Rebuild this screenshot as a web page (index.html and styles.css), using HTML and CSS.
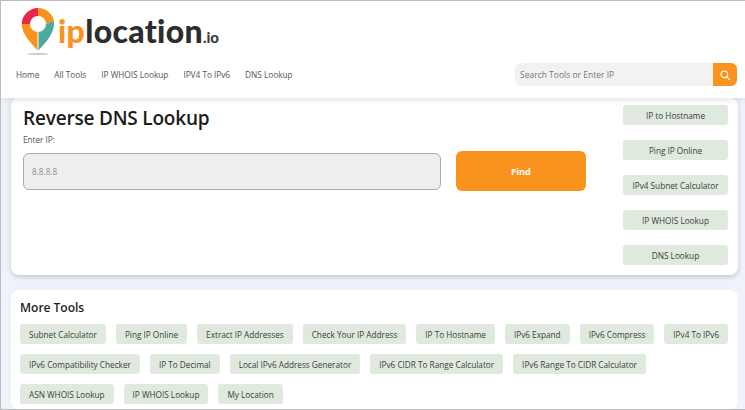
FILE: index.html
```html
<!DOCTYPE html>
<html lang="en">
<head>
<meta charset="utf-8">
<title>Reverse DNS Lookup</title>
<link rel="stylesheet" href="styles.css">
</head>
<body>
<div class="frame">
  <header class="header">
    <a class="logo" href="#">
      <svg class="pin" width="36" height="48" viewBox="20 6 36 48">
        <ellipse cx="38" cy="53" rx="11" ry="1" fill="#ccc"/>
        <path d="M38 7A16.3 16.3 0 0 0 21.700 23H30A8 8 0 0 1 38 15Z" fill="#e8264e"/>
        <path d="M21.700 23C21.700 33 31 42 37.500 49.500V31A8 8 0 0 1 30 23Z" fill="#f9931d"/>
        <path d="M38 7A16.300 16.300 0 0 1 54 20L46 23A8 8 0 0 0 38 15Z" fill="#f9931d"/>
        <path d="M54 20C55 33 45 42 38.500 49.500V31A8 8 0 0 0 46 23Z" fill="#4da8a0"/>
      </svg>
      <span class="logo-text"><span class="logo-ip">ip</span>location<span class="logo-io">.io</span></span>
    </a>
    <div class="header-row">
      <nav class="nav">
        <a href="#">Home</a>
        <a href="#">All Tools</a>
        <a href="#">IP WHOIS Lookup</a>
        <a href="#">IPV4 To IPv6</a>
        <a href="#">DNS Lookup</a>
      </nav>
      <form class="search">
        <input class="search-input" type="text" placeholder="Search Tools or Enter IP">
        <button class="search-btn" type="button" aria-label="Search">
          <svg width="10" height="10" viewBox="0 0 10 10" fill="none" stroke="#fff" stroke-width="1.200" stroke-linecap="round"><circle cx="4.300" cy="4.300" r="3.300"/><path d="M6.800 6.800L9.300 9.300"/></svg>
        </button>
      </form>
    </div>
  </header>
  <main class="main">
    <section class="card card-lookup">
      <div class="lookup">
        <h1 class="title">Reverse DNS Lookup</h1>
        <label class="label">Enter IP:</label>
        <div class="lookup-row">
          <input class="ip-input" type="text" placeholder="8.8.8.8">
          <button class="find" type="button">Find</button>
        </div>
      </div>
      <aside class="side">
        <a class="chip" href="#">IP to Hostname</a>
        <a class="chip" href="#">Ping IP Online</a>
        <a class="chip" href="#">IPv4 Subnet Calculator</a>
        <a class="chip" href="#">IP WHOIS Lookup</a>
        <a class="chip" href="#">DNS Lookup</a>
      </aside>
    </section>
    <section class="card card-more">
      <h2 class="more-title">More Tools</h2>
      <div class="chips">
        <a class="chip" href="#">Subnet Calculator</a>
        <a class="chip" href="#">Ping IP Online</a>
        <a class="chip" href="#">Extract IP Addresses</a>
        <a class="chip" href="#">Check Your IP Address</a>
        <a class="chip" href="#">IP To Hostname</a>
        <a class="chip" href="#">IPv6 Expand</a>
        <a class="chip" href="#">IPv6 Compress</a>
        <a class="chip" href="#">IPv4 To IPv6</a>
        <a class="chip" href="#">IPv6 Compatibility Checker</a>
        <a class="chip" href="#">IP To Decimal</a>
        <a class="chip" href="#">Local IPv6 Address Generator</a>
        <a class="chip" href="#">IPv6 CIDR To Range Calculator</a>
        <a class="chip" href="#">IPv6 Range To CIDR Calculator</a>
        <a class="chip" href="#">ASN WHOIS Lookup</a>
        <a class="chip" href="#">IP WHOIS Lookup</a>
        <a class="chip" href="#">My Location</a>
      </div>
    </section>
  </main>
</div>
</body>
</html>
```
FILE: styles.css
```css
* { box-sizing: border-box; }
html, body { margin: 0; padding: 0; }
body { font-family: "Open Sans", "Noto Sans", sans-serif; color: #212529; background: #fff; }
a { text-decoration: none; color: inherit; }

.frame {
  width: 745px;
  height: 410px;
  overflow: hidden;
  background: #eef3fb;
  border-top: 1px solid #bdbdbd;
  border-left: 1px solid #bdbdbd;
  border-bottom: 1px solid #bdbdbd;
  display: flex;
  flex-direction: column;
}

.header {
  position: relative;
  z-index: 2;
  flex: none;
  height: 97px;
  background: #fff;
  box-shadow: 0 1px 8px rgba(0, 0, 0, .12);
  padding: 6px 8px 0 15px;
}
.logo { display: flex; align-items: flex-start; gap: 2px; height: 48px; padding-left: 4px; }
.logo-text {
  font-family: "Lato", sans-serif;
  font-weight: 900;
  font-size: 32px;
  line-height: 30px;
  letter-spacing: .3px;
  color: #2d2d2d;
  margin-top: 9px;
}
.logo-ip { color: #f9931d; }
.logo-io { font-size: 15px; letter-spacing: 0; color: #3c3c3c; }

.header-row { display: flex; align-items: center; justify-content: space-between; margin-top: 8px; }
.nav { display: flex; gap: 15px; font-size: 8.300px; letter-spacing: -.03px; color: #555; }

.search { display: flex; width: 222px; height: 23px; }
.search-input {
  flex: 1;
  min-width: 0;
  border: 0;
  outline: 0;
  background: #f2f2f2;
  border-radius: 6px 0 0 6px;
  padding: 0 5px;
  font: 8.500px "Open Sans", sans-serif;
}
.search-input::placeholder { color: #777; opacity: 1; }
.search-btn {
  width: 24px;
  border: 0;
  padding: 0;
  background: #f9931d;
  border-radius: 0 6px 6px 0;
  display: flex;
  align-items: center;
  justify-content: center;
}

.main { flex: 1; min-height: 0; padding: 0 7px 0 10px; display: flex; flex-direction: column; gap: 15px; }
.card { background: #fff; border-radius: 8px; }
.card-lookup {
  flex: none;
  height: 177px;
  padding: 6px 10px 0 12px;
  display: flex;
  justify-content: space-between;
  box-shadow: 0 2px 5px rgba(0, 0, 0, .18);
}
.lookup { width: 563px; padding-top: 1px; }
.title { margin: 0; font-size: 19px; line-height: 27px; font-weight: 600; letter-spacing: -.2px; color: #1c1c1c; }
.label { display: block; margin-top: 2px; font-size: 8.200px; line-height: 11px; color: #555; }
.lookup-row { display: flex; align-items: center; justify-content: space-between; margin-top: 6px; }
.ip-input {
  width: 418px;
  height: 37px;
  background: #eee;
  border: 1px solid #aaa;
  border-radius: 6px;
  padding: 0 8px;
  outline: 0;
  font: 8.200px "Open Sans", sans-serif;
}
.ip-input::placeholder { color: #8a9296; opacity: 1; }
.find {
  width: 130px;
  height: 40px;
  background: #f9931d;
  color: #fff;
  border: 0;
  border-radius: 6px;
  font: 700 9.300px "Open Sans", sans-serif;
}

.side { width: 105px; display: flex; flex-direction: column; gap: 15px; padding-top: 1px; }
.chip {
  display: flex;
  align-items: center;
  justify-content: center;
  height: 20px;
  padding: 0 9px;
  background: #dfe9de;
  border-radius: 3px;
  font-size: 8.250px;
  letter-spacing: -.02px;
  color: #3a3f3a;
  white-space: nowrap;
}

.card-more { flex: 1; padding: 9px 9px 0 9px; }
.more-title { margin: 0 0 8px; font-size: 12px; line-height: 17px; font-weight: 600; color: #1c1c1c; }
.chips { display: flex; flex-wrap: wrap; gap: 10px; }
```
